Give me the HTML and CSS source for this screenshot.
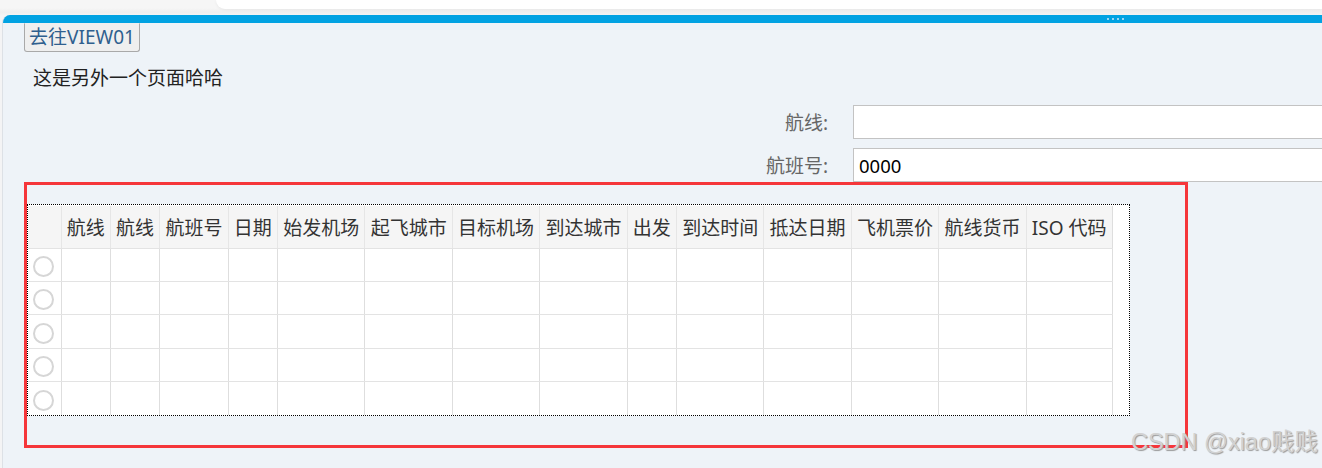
FILE: index.html
```html
<!DOCTYPE html>
<html lang="zh">
<head>
<meta charset="utf-8">
<title>VIEW02</title>
<link rel="stylesheet" href="styles.css">
</head>
<body>
<div class="topstrip"><div class="tab"></div></div>
<div class="frame">
  <div class="bluebar"><span class="grip"><i></i><i></i><i></i><i></i></span></div>
  <div class="content">
    <button class="btn">去往VIEW01</button>
    <p class="intro">这是另外一个页面哈哈</p>
    <div class="form">
      <div class="row"><label class="lbl">航线:</label><input class="inp" type="text" value=""></div>
      <div class="row"><label class="lbl">航班号:</label><input class="inp" type="text" value="0000"></div>
    </div>
    <div class="mark">
      <div class="grid">
        <table class="tbl">
          <thead>
            <tr>
              <th class="sel"></th>
              <th>航线</th><th>航线</th><th>航班号</th><th>日期</th><th>始发机场</th><th>起飞城市</th><th>目标机场</th><th>到达城市</th><th>出发</th><th>到达时间</th><th>抵达日期</th><th>飞机票价</th><th>航线货币</th><th>ISO 代码</th>
            </tr>
          </thead>
          <tbody>
            <tr><td class="sel"><span class="radio"></span></td><td></td><td></td><td></td><td></td><td></td><td></td><td></td><td></td><td></td><td></td><td></td><td></td><td></td><td></td></tr>
            <tr><td class="sel"><span class="radio"></span></td><td></td><td></td><td></td><td></td><td></td><td></td><td></td><td></td><td></td><td></td><td></td><td></td><td></td><td></td></tr>
            <tr><td class="sel"><span class="radio"></span></td><td></td><td></td><td></td><td></td><td></td><td></td><td></td><td></td><td></td><td></td><td></td><td></td><td></td><td></td></tr>
            <tr><td class="sel"><span class="radio"></span></td><td></td><td></td><td></td><td></td><td></td><td></td><td></td><td></td><td></td><td></td><td></td><td></td><td></td><td></td></tr>
            <tr class="last"><td class="sel"><span class="radio"></span></td><td></td><td></td><td></td><td></td><td></td><td></td><td></td><td></td><td></td><td></td><td></td><td></td><td></td><td></td></tr>
          </tbody>
        </table>
      </div>
    </div>
  </div>
</div>
<div class="watermark">CSDN @xiao贱贱</div>
</body>
</html>
```

FILE: styles.css
```css
html, body {
  margin: 0;
  padding: 0;
}
body {
  width: 1322px;
  height: 468px;
  overflow: hidden;
  background: #f4f4f5;
  font-family: "Noto Sans", "Noto Sans CJK SC", sans-serif;
  position: relative;
}
.topstrip {
  height: 15px;
  background: linear-gradient(#f6f6f6 0, #f6f6f6 8px, #efefef 12px, #f3f3f3 15px);
}
.tab {
  margin-left: 216px;
  height: 9px;
  background: #ffffff;
  border-bottom-left-radius: 12px;
  box-shadow: 0 1px 3px rgba(0,0,0,0.06);
}
.frame {
  margin-left: 2px;
  height: 453px;
  border-left: 1px solid #dde1e6;
  background: #eef3f8;
  border-top-left-radius: 8px;
  overflow: hidden;
}
.bluebar {
  height: 8px;
  background: #01a2e2;
  position: relative;
}
.grip {
  position: absolute;
  left: 1104px;
  top: 3px;
  display: flex;
  gap: 3px;
}
.grip i {
  display: block;
  width: 2px;
  height: 2px;
  background: #9ad6f2;
}
.content {
  padding-left: 21px;
}
.btn {
  appearance: none;
  -webkit-appearance: none;
  display: block;
  margin: 0;
  width: 116px;
  height: 29px;
  padding: 0;
  border: 1px solid #a9a9a9;
  border-top-color: transparent;
  border-radius: 0 0 3px 3px;
  background: #efefef;
  color: #2f5f8e;
  font-family: "Noto Sans", "Noto Sans CJK SC", sans-serif;
  font-size: 19px;
  line-height: 25px;
}
.intro {
  margin: 13px 0 0 9px;
  font-size: 19px;
  line-height: 26px;
  color: #222;
}
.form {
  margin-top: 14px;
  display: flex;
  flex-direction: column;
  gap: 9px;
}
.row {
  display: flex;
  align-items: center;
  gap: 25px;
}
.lbl {
  flex: 0 0 804px;
  text-align: right;
  font-size: 19px;
  color: #666;
}
.inp {
  flex: 0 0 520px;
  height: 34px;
  box-sizing: border-box;
  border: 1px solid #c3c3c3;
  background: #fff;
  padding: 0 5px;
  margin: 0;
  font-family: "Noto Sans", "Noto Sans CJK SC", sans-serif;
  font-size: 18.5px;
  color: #000;
  outline: none;
}
.mark {
  width: 1158px;
  height: 241px;
  border: 3px solid #f5363a;
  padding-top: 19px;
  box-sizing: content-box;
}
.grid {
  width: 1101px;
  border: 1px dotted #000;
  background: #fff;
  padding-top: 1px;
}
.tbl {
  border-collapse: collapse;
  font-size: 19px;
}
.tbl th {
  height: 42px;
  padding: 0 5.2px;
  background: #f5f5f5;
  color: #333;
  font-weight: normal;
  white-space: nowrap;
  border-left: 1px solid #e6e6e6;
  border-bottom: 1px solid #e3e3e3;
  box-sizing: border-box;
}
.tbl td {
  height: 33.4px;
  padding: 0;
  border-left: 1px solid #dedede;
  border-bottom: 1px solid #e3e3e3;
  box-sizing: border-box;
}
.tbl tr.last td {
  border-bottom: none;
}
.tbl th.sel, .tbl td.sel {
  width: 33px;
  min-width: 33px;
  border-left: none;
  text-align: center;
  padding: 0;
}
.tbl th:last-child, .tbl td:last-child {
  border-right: 1px solid #dedede;
}
.radio {
  display: inline-block;
  width: 21px;
  height: 21px;
  box-sizing: border-box;
  border: 2px solid #d6d6d6;
  border-radius: 50%;
  vertical-align: middle;
  margin-right: 1px;
}
.watermark {
  position: absolute;
  right: 4px;
  bottom: 11px;
  font-family: "Liberation Sans", "Noto Sans CJK SC", sans-serif;
  font-size: 23.5px;
  color: #d2d2d2;
  text-shadow: 1px 1px 1px #9a9a9a;
}
```
